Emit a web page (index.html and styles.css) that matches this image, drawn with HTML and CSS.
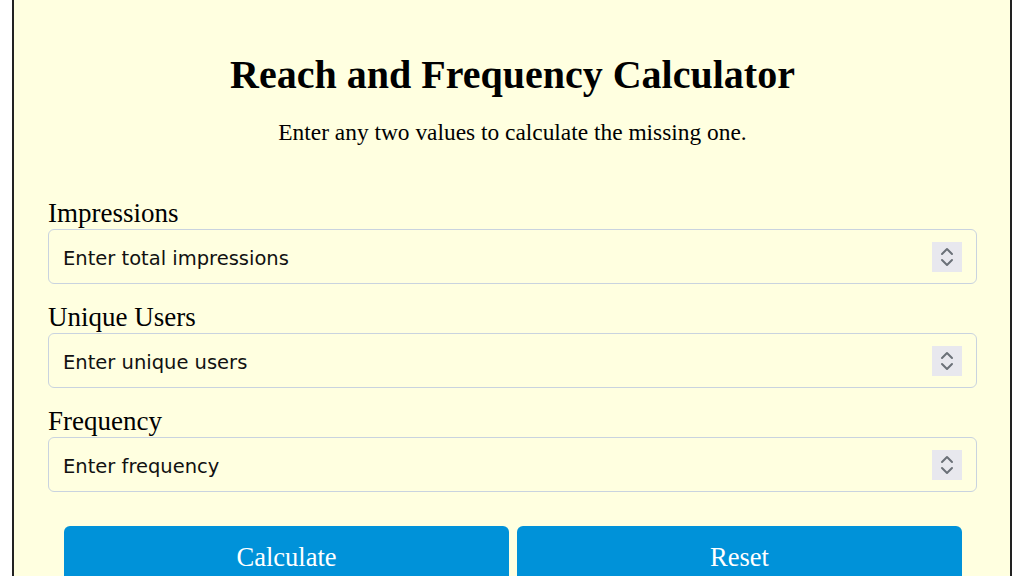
FILE: index.html
```html
<!DOCTYPE html>
<html lang="en">
<head>
<meta charset="utf-8">
<title>Reach and Frequency Calculator</title>
<link rel="stylesheet" href="styles.css">
</head>
<body>
<div class="container">
  <h1 class="title">Reach and Frequency Calculator</h1>
  <p class="subtitle">Enter any two values to calculate the missing one.</p>
  <form class="form">
    <div class="group">
      <label class="label" for="impressions">Impressions</label>
      <div class="field">
        <input class="input" id="impressions" type="text" placeholder="Enter total impressions">
        <span class="spin"><svg viewBox="0 0 30 30" width="30" height="30"><path d="M10 12 L15 7 L20 12" /><path d="M10 18 L15 23 L20 18" /></svg></span>
      </div>
    </div>
    <div class="group">
      <label class="label" for="users">Unique Users</label>
      <div class="field">
        <input class="input" id="users" type="text" placeholder="Enter unique users">
        <span class="spin"><svg viewBox="0 0 30 30" width="30" height="30"><path d="M10 12 L15 7 L20 12" /><path d="M10 18 L15 23 L20 18" /></svg></span>
      </div>
    </div>
    <div class="group">
      <label class="label" for="frequency">Frequency</label>
      <div class="field">
        <input class="input" id="frequency" type="text" placeholder="Enter frequency">
        <span class="spin"><svg viewBox="0 0 30 30" width="30" height="30"><path d="M10 12 L15 7 L20 12" /><path d="M10 18 L15 23 L20 18" /></svg></span>
      </div>
    </div>
    <div class="buttons">
      <button type="button" class="btn">Calculate</button>
      <button type="button" class="btn">Reset</button>
    </div>
  </form>
</div>
</body>
</html>
```
FILE: styles.css
```css
html, body {
  margin: 0;
  padding: 0;
  background: #ffffff;
}
body {
  font-family: "Liberation Serif", "Times New Roman", serif;
  color: #000;
}
.container {
  box-sizing: border-box;
  width: 1000px;
  min-height: 600px;
  margin: 0 auto;
  background: #ffffe0;
  border: 2px solid #222;
  border-top: none;
  padding: 51px 33px 0 34px;
}
.title {
  margin: 0;
  text-align: center;
  font-size: 40px;
  font-weight: bold;
  line-height: 48px;
}
.subtitle {
  margin: 20px 0 0;
  text-align: center;
  font-size: 23.4px;
  line-height: 26px;
}
.form {
  margin-top: 53px;
}
.group {
  display: flex;
  flex-direction: column;
  margin-bottom: 18px;
}
.label {
  font-size: 27px;
  line-height: 30px;
  margin-bottom: 1px;
}
.field {
  display: flex;
  align-items: center;
  height: 55px;
  box-sizing: border-box;
  border: 1px solid #c9d3df;
  border-radius: 6px;
  padding: 0 14px 0 14px;
}
.input {
  flex: 1;
  border: none;
  outline: none;
  background: transparent;
  font-family: "DejaVu Sans", Verdana, sans-serif;
  font-size: 19.5px;
  color: #111;
  padding: 0;
  margin-top: 3px;
}
.input::placeholder {
  color: #111;
  opacity: 1;
}
.spin {
  display: flex;
  width: 30px;
  height: 30px;
  background: #e8e8ee;
}
.spin svg path {
  fill: none;
  stroke: #6b7178;
  stroke-width: 2;
  stroke-linecap: round;
  stroke-linejoin: round;
}
.buttons {
  display: flex;
  gap: 8px;
  padding: 16px 15px 0 16px;
}
.btn {
  flex: 1;
  height: 62px;
  border: none;
  border-radius: 6px;
  background: #0092d9;
  color: #fff;
  font-family: "Liberation Serif", "Times New Roman", serif;
  font-size: 26.5px;
  cursor: pointer;
}
```
